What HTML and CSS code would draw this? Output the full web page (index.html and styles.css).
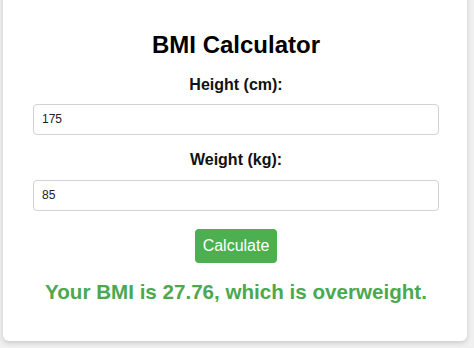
FILE: index.html
```html
<!DOCTYPE html>
<html>
<head>
<meta charset="utf-8">
<link rel="stylesheet" href="styles.css">
</head>
<body>
<div class="page">
  <div class="card">
    <h1 class="title">BMI Calculator</h1>
    <label class="label label-first" for="h">Height (cm):</label>
    <input class="field field-first" id="h" type="text" value="175">
    <label class="label" for="w">Weight (kg):</label>
    <input class="field" id="w" type="text" value="85">
    <button class="btn" type="button">Calculate</button>
    <p class="result">Your BMI is 27.76, which is overweight.</p>
  </div>
</div>
</body>
</html>
```
FILE: styles.css
```css
html, body {
  margin: 0;
  padding: 0;
  background: #f0f0f0;
  font-family: "Liberation Sans", Arial, sans-serif;
}
.page {
  padding: 0 7px 9px 3px;
}
.card {
  margin-top: -10px;
  background: #ffffff;
  border-radius: 6px;
  box-shadow: 0 2px 5px rgba(0, 0, 0, 0.16);
  padding: 41px 28px 37px 30px;
  display: flex;
  flex-direction: column;
  align-items: stretch;
}
.title {
  margin: 0;
  font-size: 24px;
  font-weight: bold;
  text-align: center;
  color: #000;
  line-height: 27.6px;
}
.label {
  display: block;
  margin-top: 16px;
  font-size: 16px;
  font-weight: bold;
  text-align: center;
  color: #111;
  line-height: 18.4px;
}
.label-first {
  margin-top: 17.4px;
}
.field {
  box-sizing: border-box;
  margin-top: 10.6px;
  width: 100%;
  height: 31px;
  padding: 0 8px;
  border: 1px solid #d2d2d2;
  border-radius: 4px;
  font-family: "Liberation Sans", Arial, sans-serif;
  font-size: 12px;
  color: #222;
  background: #fff;
  outline: none;
}
.field-first {
  margin-top: 9.6px;
}
.btn {
  align-self: center;
  margin-top: 18px;
  padding: 0 8px;
  height: 34px;
  border: none;
  border-radius: 4px;
  background: #4caf50;
  color: #fff;
  font-family: "Liberation Sans", Arial, sans-serif;
  font-size: 16px;
  line-height: 18.4px;
}
.result {
  margin: 17px 0 0;
  text-align: center;
  font-size: 20.6px;
  font-weight: bold;
  color: #4ba84f;
  line-height: 23.6px;
}
```
